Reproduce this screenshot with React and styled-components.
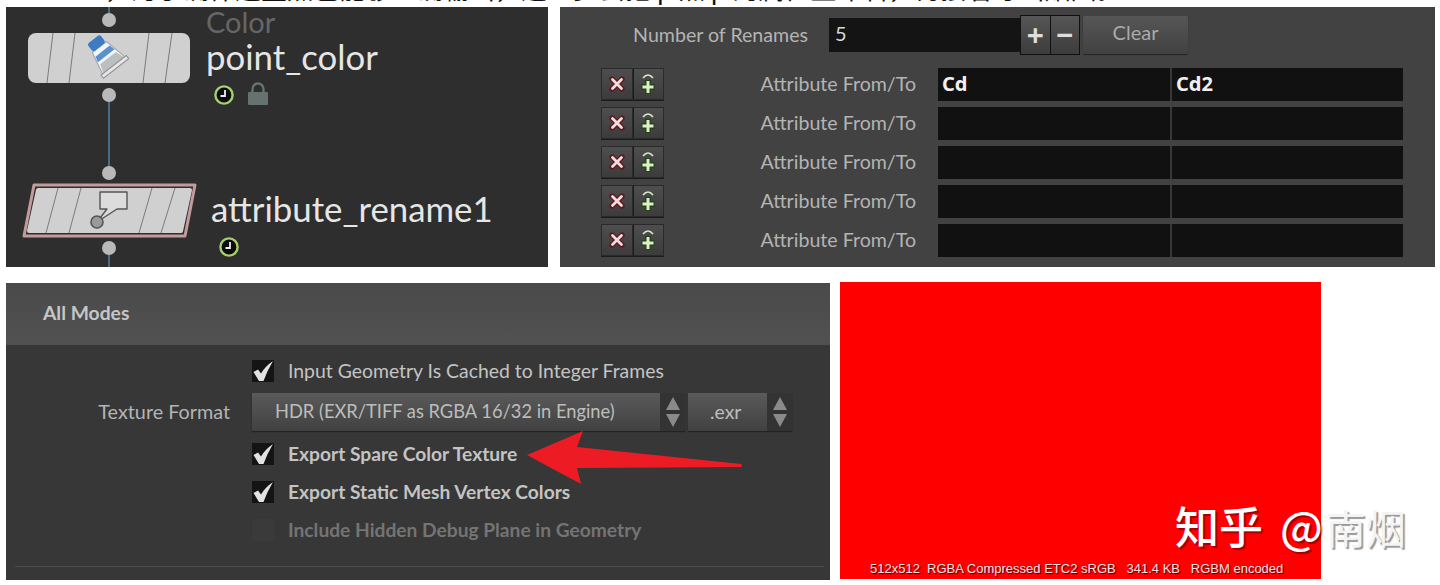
import React from 'react'
import styled, { createGlobalStyle } from 'styled-components'

const GlobalStyle = createGlobalStyle`
  html, body { margin: 0; padding: 0; background: #fff; }
  * { box-sizing: border-box; }
`

const UI_FONT = `Lato, 'Noto Sans', sans-serif`

const Page = styled.div`
  width: 1440px;
  height: 585px;
  overflow: hidden;
  background: #fff;
  font-family: ${UI_FONT};
`
const TopStrip = styled.div`
  height: 7px;
  overflow: hidden;
  padding-left: 105px;
`
const TopLine = styled.div`
  margin-top: -25px;
  font: 26px/26px 'Noto Sans CJK SC', sans-serif;
  color: #111;
  white-space: nowrap;
`
const TopRow = styled.div`
  display: flex;
  gap: 12px;
  height: 260px;
  padding-left: 6px;
`
const BottomRow = styled.div`
  display: flex;
  gap: 10px;
  height: 297px;
  margin-top: 16px;
  padding-left: 6px;
`

/* node graph */
const Graph = styled.div`
  position: relative;
  width: 542px;
  height: 260px;
  background: #2e2e2e;
  overflow: hidden;
`
const Wire = styled.div`
  position: absolute;
  left: ${p => p.$x}px;
  top: ${p => p.$y}px;
  width: 2px;
  height: ${p => p.$h}px;
  background: #4b6a84;
`
const Dot = styled.div`
  position: absolute;
  left: ${p => p.$x - 7}px;
  top: ${p => p.$y - 7}px;
  width: 14px;
  height: 14px;
  border-radius: 50%;
  background: #b9b9b9;
`
const NodeArt = styled.svg`
  position: absolute;
  left: ${p => p.$x}px;
  top: ${p => p.$y}px;
`
const NodeName = styled.div`
  position: absolute;
  left: ${p => p.$x}px;
  top: ${p => p.$y}px;
  font-size: 34.8px;
  line-height: 40px;
  color: #e6e6e6;
  white-space: nowrap;
`
const NodeType = styled(NodeName)`
  font-size: 29px;
  color: #666;
`

/* parameters */
const ParmPanel = styled.div`
  width: 875px;
  height: 260px;
  background: #424242;
  padding: 8px 0 0 41px;
`
const CountRow = styled.div`
  display: flex;
  align-items: center;
  height: 40px;
  margin-bottom: 13px;
`
const CountLabel = styled.div`
  width: 207px;
  padding-bottom: 2px;
  text-align: right;
  font-size: 19.6px;
  color: #b4b4b4;
`
const CountInput = styled.div`
  width: 191px;
  height: 34px;
  margin-left: 21px;
  padding-left: 6px;
  background: #141414;
  color: #d8d8d8;
  font-size: 20px;
  line-height: 31px;
`
const PlusMinus = styled.div`
  display: flex;
  width: 60px;
  height: 40px;
  border: 1px solid #111;
`
const PlusMinusButton = styled.div`
  flex: 1;
  display: flex;
  align-items: center;
  justify-content: center;
  background: linear-gradient(#565656, #3c3c3c);
  color: #ddd;
  font: 700 30px/1 'Noto Sans', sans-serif;
  & + & { border-left: 1px solid #111; }
`
const ClearButton = styled.div`
  width: 105px;
  height: 38px;
  margin-left: 3px;
  background: linear-gradient(#565656, #414141);
  box-shadow: 0 1px 1px #222;
  border-radius: 2px;
  color: #aaa;
  font-size: 20px;
  line-height: 33px;
  text-align: center;
`
const RenameList = styled.div`
  display: grid;
  gap: 6px;
`
const RenameRow = styled.div`
  display: grid;
  grid-template-columns: 63px 274px 234px 231px;
  height: 33px;
  align-items: center;
`
const RowButtons = styled.div`
  display: flex;
  height: 33px;
  border-bottom: 1px solid #1c1c1c;
`
const RowButton = styled.div`
  flex: 1;
  display: flex;
  align-items: center;
  justify-content: center;
  background: linear-gradient(#4e4e4e, #3c3c3c);
  border: 1px solid #2a2a2a;
  & + & { border-left: 1px solid #1c1c1c; }
`
const RowLabel = styled.div`
  padding: 0 22px 3px 0;
  text-align: right;
  font-size: 19.6px;
  color: #b4b4b4;
`
const Cell = styled.div`
  height: 33px;
  background: #111;
  border-right: ${p => (p.$last ? 0 : '2px solid #383838')};
  padding-left: 4px;
  color: #f0f0f0;
  font: 700 20px/31px 'Noto Sans', sans-serif;
`

/* export section */
const Section = styled.div`
  position: relative;
  width: 824px;
  height: 297px;
  background: #373737;
`
const SectionHead = styled.div`
  height: 62px;
  padding-left: 37px;
  background: linear-gradient(#4a4a4a, #515151);
  color: #c6c6c6;
  font-size: 19.3px;
  font-weight: 700;
  line-height: 60px;
`
const SectionBody = styled.div`
  padding-top: 7px;
`
const Field = styled.div`
  display: flex;
  align-items: center;
  height: 38px;
  padding-left: 246px;
  color: ${p => (p.$dim ? '#747474' : '#c4c4c4')};
  font-size: ${p => (p.$bold ? 19.2 : 19.4)}px;
  font-weight: ${p => (p.$bold ? 700 : 400)};
`
const FieldText = styled.span`
  margin-top: -2px;
`
const SelectField = styled(Field)`
  position: relative;
  margin: 3px 0 4px;
  padding-left: 0;
`
const FieldLabel = styled.div`
  width: 224px;
  margin: -2px 22px 0 0;
  font-size: 19.8px;
  text-align: right;
  color: #b4b4b4;
`
const Check = styled.div`
  flex: none;
  width: 22px;
  height: 22px;
  margin-right: 14px;
  background: ${p => (p.$off ? '#3a3a3a' : '#141414')};
`
const Select = styled.div`
  display: flex;
  width: ${p => p.$w}px;
  height: 38px;
  margin-right: 3px;
  background: linear-gradient(#5a5a5a, #414141);
  box-shadow: 0 1px 1px #222;
  color: #bdbdbd;
`
const SelectText = styled.div`
  flex: 1;
  padding-left: ${p => p.$pad}px;
  font-size: ${p => p.$size}px;
  line-height: 37px;
  white-space: nowrap;
`
const Stepper = styled.div`
  flex: none;
  width: 25px;
  display: flex;
  align-items: center;
  justify-content: center;
  background: #333;
`
const Rule = styled.div`
  height: 1px;
  margin: 17px 6px 0 9px;
  background: #4c4c4c;
`
const CalloutArrow = styled.svg`
  position: absolute;
  left: 520px;
  top: 147px;
`

/* texture preview */
const Preview = styled.div`
  position: relative;
  display: flex;
  align-items: flex-end;
  width: 481px;
  height: 297px;
  margin-top: -1px;
  padding: 0 0 2px 30px;
  background: #fe0000;
`
const Caption = styled.div`
  font: 13px/16px 'Liberation Sans', sans-serif;
  color: #eee2e2;
  text-shadow: 1px 1px 1px #400;
  white-space: pre;
`
const Watermark = styled.div`
  position: absolute;
  left: 335px;
  top: 218px;
  font: 500 44px/50px 'Noto Sans CJK SC', sans-serif;
  color: #fff;
  text-shadow: 2px 2px 1px rgba(90, 0, 0, 0.55);
  white-space: pre;
`
const WatermarkAt = styled.span`
  margin-left: 7px;
`
const WatermarkName = styled.span`
  margin-left: 3px;
  font-size: 40px;
  font-weight: 400;
  color: #f4f4f4;
  text-shadow: 2px 2px 1px #999;
`

const Clock = ({ x, y }) => (
  <NodeArt $x={x} $y={y} width="22" height="22" viewBox="0 0 22 22">
    <circle cx="11" cy="11" r="8.6" fill="#0c0c0c" stroke="#a6d06c" strokeWidth="2.4" />
    <path d="M12 6v6H7.5" fill="none" stroke="#eee" strokeWidth="1.8" />
  </NodeArt>
)

const SmallLock = () => (
  <NodeArt $x={241} $y={75} width="22" height="24" viewBox="0 0 22 24">
    <path d="M5.5 11V7a5.5 5.5 0 0 1 11 0v4" fill="none" stroke="#66726f" strokeWidth="2.4" />
    <rect x="1" y="10" width="20" height="13" rx="1" fill="#66726f" />
  </NodeArt>
)

const TubeNode = () => (
  <NodeArt $x={22} $y={26} width="162" height="50" viewBox="0 0 162 50">
    <rect width="162" height="50" rx="8" fill="#d0d0d0" />
    <path d="M25 0 19 50M47 0 41 50M121 0 115 50M144 0 137 50" stroke="#7b7b7b" strokeWidth="1" />
    <g transform="translate(69 11) rotate(-38)">
      <path d="M-9 4H9L14 27H-14Z" fill="#f2f5f7" stroke="#9aa0a4" strokeWidth="1" />
      <rect x="-8" y="-6" width="16" height="10" rx="2.5" fill="#3b7cc2" />
      <path d="M-9 9H9L10.5 15H-10.5Z" fill="#5c92cc" />
      <path d="M-10 18H10L13 27H-13Z" fill="#bcbfc0" />
      <rect x="-16" y="27" width="32" height="4" fill="#e6e6e6" stroke="#8e8e8e" strokeWidth="1" />
    </g>
  </NodeArt>
)

const RenameNode = () => (
  <NodeArt $x={15} $y={176} width="177" height="55" viewBox="0 0 177 55">
    <path d="M13 2H174L164 53H3Z" fill="#2e2e2e" stroke="#c49b9d" strokeWidth="3" strokeLinejoin="round" />
    <path d="M17 7H169L160 48H8Z" fill="#d0d0d0" stroke="#d0d0d0" strokeWidth="4" strokeLinejoin="round" />
    <path d="M37 5 25 50M60 5 48 50M131 5 118 50M154 5 140 50" stroke="#7b7b7b" strokeWidth="1" />
    <path d="M79 9H106V26H96L76 39L86 26H79Z" fill="#dcdcdc" stroke="#555" strokeWidth="1.4" strokeLinejoin="round" />
    <circle cx="76" cy="39" r="6" fill="#9a9a9a" stroke="#555" strokeWidth="1.6" />
  </NodeArt>
)

const RemoveIcon = () => (
  <svg width="16" height="16" viewBox="0 0 16 16">
    <path d="M3 3 13 13M13 3 3 13" stroke="#5c1a22" strokeWidth="5.4" strokeLinecap="round" />
    <path d="M3.5 3.5 12.5 12.5M12.5 3.5 3.5 12.5" stroke="#f4dcdc" strokeWidth="2.8" strokeLinecap="round" />
  </svg>
)

const InsertIcon = () => (
  <svg width="18" height="24" viewBox="0 0 18 24">
    <path d="M4 6Q9 0 14 6" fill="none" stroke="#d8e8c8" strokeWidth="1.6" />
    <path d="M9 8V22M2.5 15H15.5" stroke="#24421e" strokeWidth="6" />
    <path d="M9 9V21M3.5 15H14.5" stroke="#dcf0c4" strokeWidth="3" />
  </svg>
)

const CheckMark = () => (
  <svg width="22" height="22" viewBox="0 0 22 22">
    <path d="M1.5 12 6 9.5 9 13.5Q13 6.5 21 1 15.5 10 11.5 21H7Z" fill="#e2e2e2" />
  </svg>
)

const StepArrows = () => (
  <svg width="14" height="30" viewBox="0 0 14 30">
    <path d="M7 0 14 13H0ZM0 17H14L7 30Z" fill="#8a8a8a" />
  </svg>
)

const renames = [['Cd', 'Cd2'], ['', ''], ['', ''], ['', ''], ['', '']]

export default function App() {
  return (
    <Page>
      <GlobalStyle />
      <TopStrip>
        <TopLine>，为了确保这些点色能够正确输出，这一步会把 p 点 p 的属性重命名，再接着导出贴图。</TopLine>
      </TopStrip>

      <TopRow>
        <Graph>
          <Wire $x={102} $y={0} $h={13} />
          <Wire $x={102} $y={88} $h={78} />
          <Wire $x={102} $y={241} $h={19} />
          <Dot $x={103} $y={13} />
          <Dot $x={103} $y={88} />
          <Dot $x={103} $y={166} />
          <Dot $x={103} $y={241} />
          <TubeNode />
          <RenameNode />
          <NodeType $x={200} $y={-5}>Color</NodeType>
          <NodeName $x={200} $y={30}>point_color</NodeName>
          <Clock x={207} y={77} />
          <SmallLock />
          <NodeName $x={205} $y={182}>attribute_rename1</NodeName>
          <Clock x={212} y={229} />
        </Graph>

        <ParmPanel>
          <CountRow>
            <CountLabel>Number of Renames</CountLabel>
            <CountInput>5</CountInput>
            <PlusMinus>
              <PlusMinusButton>+</PlusMinusButton>
              <PlusMinusButton>−</PlusMinusButton>
            </PlusMinus>
            <ClearButton>Clear</ClearButton>
          </CountRow>
          <RenameList>
            {renames.map(([from, to], i) => (
              <RenameRow key={i}>
                <RowButtons>
                  <RowButton><RemoveIcon /></RowButton>
                  <RowButton><InsertIcon /></RowButton>
                </RowButtons>
                <RowLabel>Attribute From/To</RowLabel>
                <Cell>{from}</Cell>
                <Cell $last>{to}</Cell>
              </RenameRow>
            ))}
          </RenameList>
        </ParmPanel>
      </TopRow>

      <BottomRow>
        <Section>
          <SectionHead>All Modes</SectionHead>
          <SectionBody>
            <Field>
              <Check><CheckMark /></Check>
              <FieldText>Input Geometry Is Cached to Integer Frames</FieldText>
            </Field>
            <SelectField>
              <FieldLabel>Texture Format</FieldLabel>
              <Select $w={433}>
                <SelectText $pad={23} $size={18.3}>HDR (EXR/TIFF as RGBA 16/32 in Engine)</SelectText>
                <Stepper><StepArrows /></Stepper>
              </Select>
              <Select $w={104}>
                <SelectText $pad={22} $size={19.4}>.exr</SelectText>
                <Stepper><StepArrows /></Stepper>
              </Select>
            </SelectField>
            <Field $bold>
              <Check><CheckMark /></Check>
              <FieldText>Export Spare Color Texture</FieldText>
            </Field>
            <Field $bold>
              <Check><CheckMark /></Check>
              <FieldText>Export Static Mesh Vertex Colors</FieldText>
            </Field>
            <Field $bold $dim>
              <Check $off />
              <FieldText>Include Hidden Debug Plane in Geometry</FieldText>
            </Field>
            <Rule />
          </SectionBody>
          <CalloutArrow width="224" height="56" viewBox="0 0 224 56">
            <path d="M1 25 57 1 51 17 215 34Q217 36 215 37L51 38 55 54Z" fill="#ed1c24" />
          </CalloutArrow>
        </Section>

        <Preview>
          <Caption>512x512  RGBA Compressed ETC2 sRGB   341.4 KB   RGBM encoded</Caption>
          <Watermark>知乎 <WatermarkAt>@</WatermarkAt><WatermarkName>南烟</WatermarkName></Watermark>
        </Preview>
      </BottomRow>
    </Page>
  )
}
